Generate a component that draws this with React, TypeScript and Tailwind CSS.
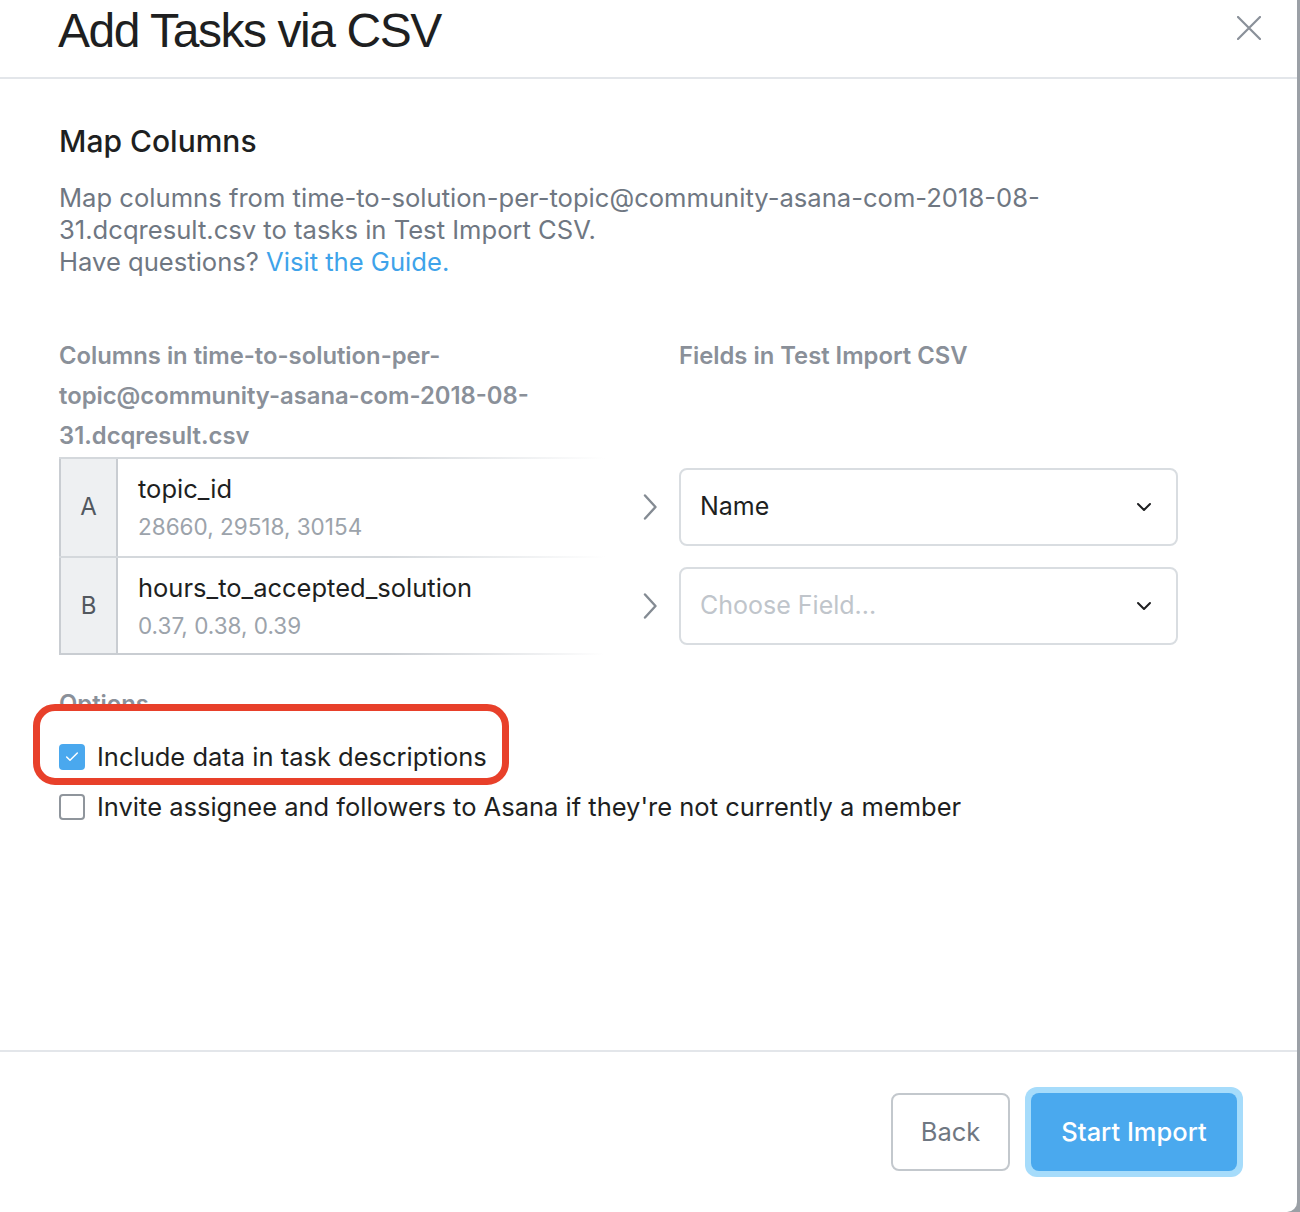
import { Check, ChevronDown } from "lucide-react";

const rows = [
  { letter: "A", name: "topic_id", sample: "28660, 29518, 30154", field: "Name" },
  { letter: "B", name: "hours_to_accepted_solution", sample: "0.37, 0.38, 0.39", field: "" },
];

function FieldSelect({ value }: { value: string }) {
  return (
    <div className="flex h-[78px] items-center justify-between rounded-[8px] border-2 border-[#d9dde1] bg-white pl-[19px] pr-[20px]">
      {value ? (
        <span className="text-[25px] text-[#1e1f21]">{value}</span>
      ) : (
        <span className="text-[25px] text-[#c0c5cb]">Choose Field...</span>
      )}
      <ChevronDown size={24} strokeWidth={2} className="text-[#1e1f21]" />
    </div>
  );
}

export default function App() {
  return (
    <div
      className="flex h-[1212px] w-[1300px] bg-[#9ba0a6]"
      style={{ fontFamily: "Inter, 'Noto Sans', sans-serif" }}
    >
      <div className="flex h-full w-[1297px] flex-col rounded-br-[10px] bg-white">
        {/* Header */}
        <div className="flex h-[79px] shrink-0 items-start justify-between border-b-2 border-[#e3e6ea] pl-[58px] pr-[36px]">
          <h1
            className="mt-[2px] text-[48px] leading-[58px] tracking-[-0.03em] text-[#1e1f21]"
            style={{ fontFamily: "'Liberation Sans', Arial, sans-serif" }}
          >
            Add Tasks via CSV
          </h1>
          <button className="mt-[16px] text-[#8a9099]">
            <svg width="24" height="24" viewBox="0 0 24 24" fill="none" stroke="currentColor" strokeWidth="2.2" strokeLinecap="round">
              <path d="M1 1L23 23M23 1L1 23" />
            </svg>
          </button>
        </div>

        {/* Body */}
        <div className="flex flex-1 flex-col px-[59px] pt-[40px]">
          <h2 className="text-[30px] leading-[44px] font-medium text-[#1e1f21]">Map Columns</h2>
          <div className="mt-[19px] text-[25.6px] leading-[32px] text-[#6f7782]">
            <p>Map columns from time-to-solution-per-topic@community-asana-com-2018-08-</p>
            <p>31.dcqresult.csv to tasks in Test Import CSV.</p>
            <p>
              Have questions? <a className="text-[#3ea3ea]">Visit the Guide.</a>
            </p>
          </div>

          <div className="mt-[58px] flex">
            <div className="w-[620px]">
              <div className="text-[23.8px] leading-[40px] font-semibold text-[#8a9099]">
                Columns in time-to-solution-per-
                <br />
                topic@community-asana-com-2018-08-
                <br />
                31.dcqresult.csv
              </div>
            </div>
            <div className="text-[23.8px] leading-[40px] font-semibold text-[#8a9099]">
              Fields in Test Import CSV
            </div>
          </div>

          {/* Mapping rows */}
          <div className="mt-[1px] flex flex-col">
            {rows.map((r, i) => (
              <div key={r.letter} className="flex items-center">
                <div className="relative flex h-[99px] w-[546px]">
                  <div className="absolute top-0 left-0 h-[2px] w-full bg-gradient-to-r from-[#d4d8dc] from-60% to-transparent" />
                  {i === rows.length - 1 && (
                    <div className="absolute bottom-0 left-0 h-[2px] w-full bg-gradient-to-r from-[#c9cdd2] from-60% to-transparent" />
                  )}
                  <div className="flex w-[59px] shrink-0 items-center justify-center border-x-2 border-[#c9cdd2] bg-[#eef0f2] text-[24px] text-[#52585f]">
                    {r.letter}
                  </div>
                  <div className="flex flex-col justify-center pt-[2px] pl-[20px]">
                    <span className="text-[25.5px] leading-[38px] text-[#1e1f21]">{r.name}</span>
                    <span className="text-[22.5px] leading-[38px] text-[#9ca3ab]">{r.sample}</span>
                  </div>
                </div>
                <div className="flex w-[74px] justify-center pl-[16px]">
                  <svg width="14" height="26" viewBox="0 0 14 26" fill="none" stroke="#848b93" strokeWidth="2.4" strokeLinecap="round" strokeLinejoin="round">
                    <path d="M2 1.5L12.5 13L2 24.5" />
                  </svg>
                </div>
                <div className="w-[499px]">
                  <FieldSelect value={r.field} />
                </div>
              </div>
            ))}
          </div>

          {/* Options */}
          <div className="mt-[34px] text-[23.8px] leading-[30px] font-semibold text-[#8a9099]">Options</div>
          <div className="relative mt-[20px] flex h-[36px] items-center gap-[12px]">
            <div className="absolute top-[-35px] left-[-26px] h-[81px] w-[476px] rounded-[22px] border-[7px] border-[#e8402a] bg-white" />
            <div className="relative flex h-[26px] w-[26px] items-center justify-center rounded-[4px] bg-[#4aa8ee]">
              <Check size={16} strokeWidth={2.2} className="text-white" />
            </div>
            <span className="relative text-[25.5px] leading-[36px] text-[#1e1f21]">
              Include data in task descriptions
            </span>
          </div>
          <div className="mt-[14px] flex h-[36px] items-center gap-[12px]">
            <div className="h-[26px] w-[26px] rounded-[4px] border-2 border-[#8f959c] bg-white" />
            <span className="text-[25.5px] leading-[36px] text-[#1e1f21]">
              Invite assignee and followers to Asana if they're not currently a member
            </span>
          </div>
        </div>

        {/* Footer */}
        <div className="flex h-[162px] shrink-0 items-center justify-end gap-[15px] border-t-2 border-[#e3e6ea] pr-[54px]">
          <button className="h-[78px] w-[119px] rounded-[8px] border-2 border-[#c3c8cd] bg-white text-[25.5px] text-[#6f7782]">
            Back
          </button>
          <div className="rounded-[12px] bg-[#a6dcfb] p-[6px]">
            <button className="h-[78px] w-[206px] rounded-[8px] bg-[#4aa9ee] text-[25.5px] font-medium text-white">
              Start Import
            </button>
          </div>
        </div>
      </div>
    </div>
  );
}
